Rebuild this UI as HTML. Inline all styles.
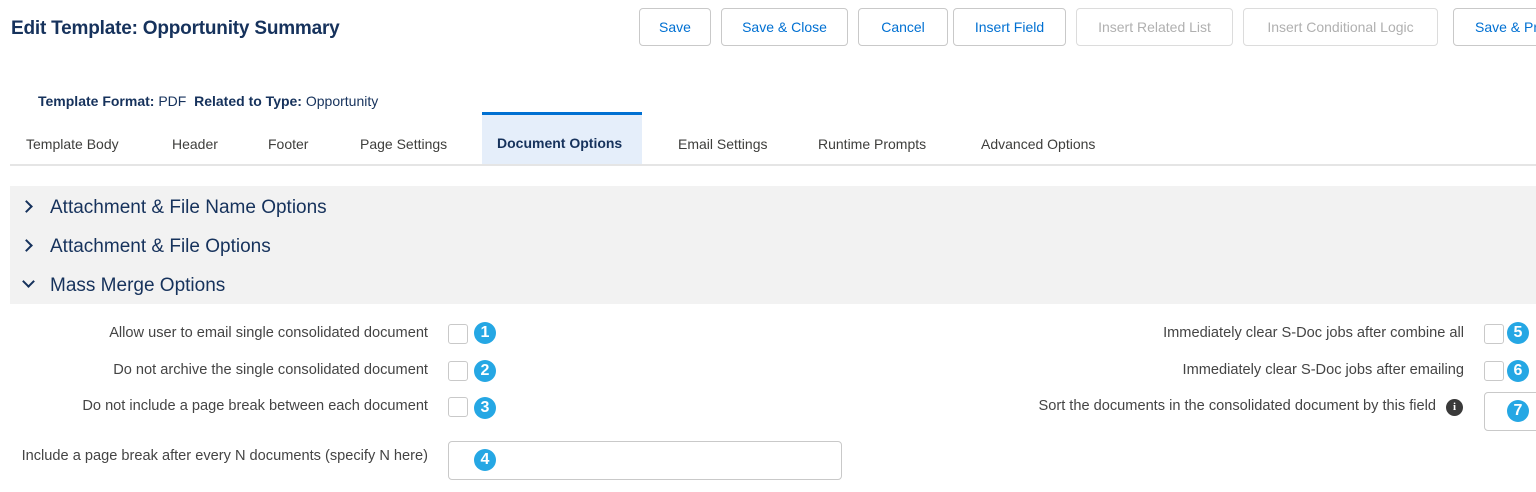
<!DOCTYPE html>
<html><head><meta charset="utf-8"><style>
*{box-sizing:border-box;margin:0;padding:0}
body{width:1536px;height:492px;overflow:hidden;background:#fff;font-family:"Liberation Sans",Arial,sans-serif;position:relative}
.a{position:absolute;white-space:nowrap}
h1{position:absolute;left:11px;top:18px;font-size:19px;color:#16325c;font-weight:bold;letter-spacing:-0.2px;white-space:nowrap}
.btn{position:absolute;top:8px;height:38px;border:1px solid #c9c9c9;border-radius:4px;background:#fff;color:#0070d2;font-size:14px;display:flex;align-items:center;justify-content:center;white-space:nowrap;overflow:hidden}
.dis{color:#b0b0b0;border-color:#dcdcdc}
.tab{position:absolute;top:136px;font-size:14px;color:#3e3e3c}
.sec{position:absolute;left:50px;font-size:19px;color:#16325c}
.chev{position:absolute;left:22px;width:9px;height:9px;border-right:2px solid #16325c;border-bottom:2px solid #16325c}
.lbl{position:absolute;font-size:14.6px;color:#444;text-align:right;white-space:nowrap}
.cb{position:absolute;width:20px;height:20px;border:1px solid #c9c9c9;border-radius:3px;background:#fff}
.bd{position:absolute;width:22px;height:22px;border-radius:50%;background:#25a7e4;color:#fff;font-weight:bold;font-size:16px;display:flex;align-items:center;justify-content:center}
.inp{position:absolute;border:1px solid #c9c9c9;border-radius:4px;background:#fff}
</style></head><body>
<h1>Edit Template: Opportunity Summary</h1>
<div class="btn" style="left:639px;width:72px">Save</div>
<div class="btn" style="left:721px;width:127px">Save &amp; Close</div>
<div class="btn" style="left:858px;width:90px">Cancel</div>
<div class="btn" style="left:953px;width:113px">Insert Field</div>
<div class="btn dis" style="left:1076px;width:157px">Insert Related List</div>
<div class="btn dis" style="left:1243px;width:195px">Insert Conditional Logic</div>
<div class="btn" style="left:1453px;width:120px;justify-content:flex-start;padding-left:21px">Save &amp; Preview</div>

<div class="a" style="left:38px;top:93px;font-size:14px;color:#16325c"><b>Template Format:</b> PDF &nbsp;<b>Related to Type:</b> Opportunity</div>

<div class="a" style="left:482px;top:112px;width:160px;height:53px;background:#e5eefa;border-top:3px solid #0070d2"></div>
<div class="a" style="left:10px;top:164px;width:1526px;height:2px;background:#e5e5e5"></div>
<div class="tab" style="left:26px">Template Body</div>
<div class="tab" style="left:172px">Header</div>
<div class="tab" style="left:268px">Footer</div>
<div class="tab" style="left:360px">Page Settings</div>
<div class="tab" style="left:497px;top:135px;font-weight:bold;color:#16325c">Document Options</div>
<div class="tab" style="left:678px">Email Settings</div>
<div class="tab" style="left:818px">Runtime Prompts</div>
<div class="tab" style="left:981px">Advanced Options</div>

<div class="a" style="left:10px;top:186px;width:1526px;height:118px;background:#f2f2f2"></div>
<div class="chev" style="top:202px;transform:rotate(-45deg)"></div>
<div class="sec" style="top:197px">Attachment &amp; File Name Options</div>
<div class="chev" style="top:241px;transform:rotate(-45deg)"></div>
<div class="sec" style="top:236px">Attachment &amp; File Options</div>
<div class="chev" style="top:277px;left:24px;transform:rotate(45deg)"></div>
<div class="sec" style="top:275px">Mass Merge Options</div>

<div class="lbl" style="right:1108px;top:325px">Allow user to email single consolidated document</div>
<div class="lbl" style="right:1108px;top:362px">Do not archive the single consolidated document</div>
<div class="lbl" style="right:1108px;top:398px">Do not include a page break between each document</div>
<div class="lbl" style="right:1108px;top:448px">Include a page break after every N documents (specify N here)</div>
<div class="cb" style="left:448px;top:324px"></div><div class="bd" style="left:474px;top:322px">1</div>
<div class="cb" style="left:448px;top:361px"></div><div class="bd" style="left:474px;top:360px">2</div>
<div class="cb" style="left:448px;top:397px"></div><div class="bd" style="left:474px;top:397px">3</div>
<div class="inp" style="left:448px;top:441px;width:394px;height:39px"></div><div class="bd" style="left:474px;top:449px">4</div>

<div class="lbl" style="right:72px;top:325px">Immediately clear S-Doc jobs after combine all</div>
<div class="lbl" style="right:72px;top:362px">Immediately clear S-Doc jobs after emailing</div>
<div class="lbl" style="right:100px;top:398px">Sort the documents in the consolidated document by this field</div>
<div class="a" style="left:1446px;top:399px;width:17px;height:17px;border-radius:50%;background:#3a3a3a;color:#fff;font-size:11px;font-weight:bold;text-align:center;line-height:17px;font-family:'Liberation Serif',serif">i</div>
<div class="cb" style="left:1484px;top:324px"></div><div class="bd" style="left:1507px;top:322px">5</div>
<div class="cb" style="left:1484px;top:361px"></div><div class="bd" style="left:1507px;top:360px">6</div>
<div class="inp" style="left:1484px;top:392px;width:70px;height:39px"></div><div class="bd" style="left:1507px;top:400px">7</div>
</body></html>
